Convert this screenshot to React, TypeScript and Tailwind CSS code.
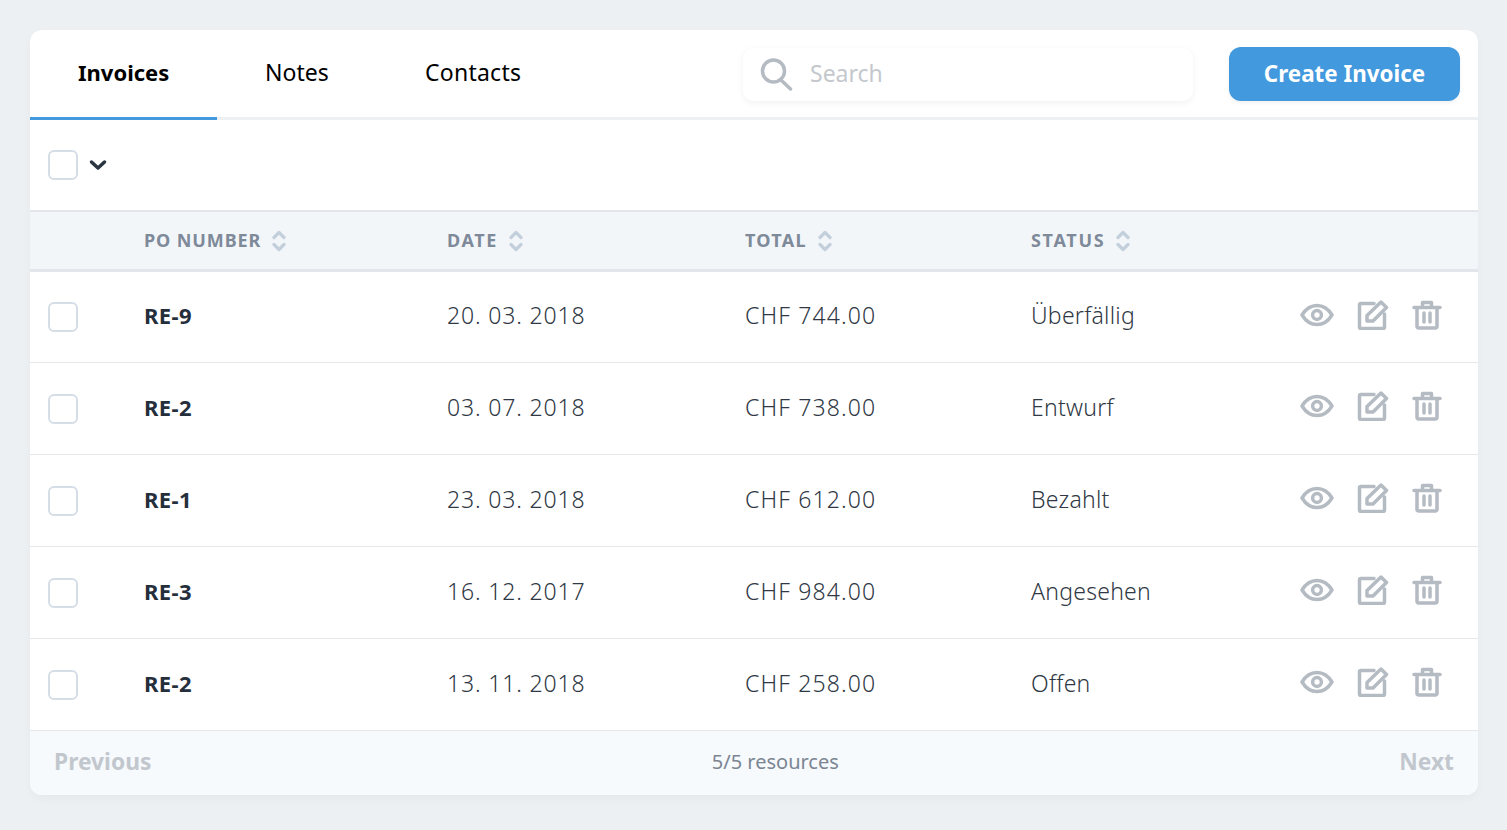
const rows = [
  { po: 'RE-9', date: '20. 03. 2018', total: 'CHF 744.00', status: 'Überfällig' },
  { po: 'RE-2', date: '03. 07. 2018', total: 'CHF 738.00', status: 'Entwurf' },
  { po: 'RE-1', date: '23. 03. 2018', total: 'CHF 612.00', status: 'Bezahlt' },
  { po: 'RE-3', date: '16. 12. 2017', total: 'CHF 984.00', status: 'Angesehen' },
  { po: 'RE-2', date: '13. 11. 2018', total: 'CHF 258.00', status: 'Offen' },
]

function Checkbox() {
  return <div className="w-[30px] h-[30px] rounded-[6px] border-2 border-[#d5dde6] bg-white" />
}

function SortIcon() {
  return (
    <svg width="14" height="24" viewBox="0 0 14 24" fill="none" stroke="#c3d0dc" strokeWidth="3.2" strokeLinecap="round" strokeLinejoin="round">
      <path d="M2 8.500 7 3.500 12 8.500" />
      <path d="M2 15.500 7 20.500 12 15.500" />
    </svg>
  )
}

function HeaderCell({ label, className }: { label: string; className: string }) {
  return (
    <div className="flex items-center gap-[11px]">
      <span className={`text-[18px] font-bold text-[#7e8a99] ${className}`}>{label}</span>
      <SortIcon />
    </div>
  )
}

function EyeIcon() {
  return (
    <svg width="34" height="26" viewBox="0 0 34 26" fill="none" stroke="#b5bbc2" strokeWidth="3.500" strokeLinejoin="round">
      <path d="M2 13C6 6.500 11 3.500 17 3.500S28 6.500 32 13C28 19.500 23 22.500 17 22.500S6 19.500 2 13Z" />
      <circle cx="17" cy="13" r="4.400" />
    </svg>
  )
}

function EditIcon() {
  return (
    <svg width="32" height="30" viewBox="0 0 32 30" fill="none" stroke="#b5bbc2" strokeWidth="3.500" strokeLinecap="round" strokeLinejoin="round">
      <path d="M17 3.500H4a1.500 1.500 0 0 0-1.500 1.500v22A1.500 1.500 0 0 0 4 28.500h22a1.500 1.500 0 0 0 1.500-1.500V14" />
      <path d="M10 21v-5.500L24 2l5.500 5.500L16 21Z" />
    </svg>
  )
}

function TrashIcon() {
  return (
    <svg width="30" height="30" viewBox="0 0 30 30" fill="none" stroke="#b5bbc2" strokeWidth="3.500" strokeLinecap="round" strokeLinejoin="round">
      <path d="M2 7.500h26" />
      <path d="M10.500 7V2.500h9V7" />
      <path d="M5 8v18.500A1.500 1.500 0 0 0 6.500 28h17a1.500 1.500 0 0 0 1.500-1.500V8" />
      <path d="M12 13v9" />
      <path d="M18 13v9" />
    </svg>
  )
}

export default function App() {
  return (
    <div className="h-[830px] bg-[#edf0f3] px-[30px] pt-[30px] font-['Noto_Sans','Liberation_Sans',sans-serif]">
      <div className="w-[1448px] h-[765px] bg-white rounded-[12px] shadow-[0_4px_8px_rgba(0,0,0,0.03)] overflow-hidden flex flex-col">
        {/* tabs */}
        <div className="h-[90px] flex border-b-[3px] border-[#edf0f3]">
          <div className="w-[187px] h-[90px] border-b-[3px] border-[#4299dd] pl-[48px] pt-[24px] text-[22px] leading-[36px] font-bold text-black shrink-0">Invoices</div>
          <div className="w-[160px] pl-[48px] pt-[24px] text-[23px] leading-[36px] text-black shrink-0">Notes</div>
          <div className="w-[366px] pl-[48px] pt-[24px] text-[23px] tracking-[0.25px] leading-[36px] text-black shrink-0">Contacts</div>
          <div className="mt-[18px] w-[450px] h-[53px] rounded-[10px] bg-white shadow-[0_2px_6px_rgba(0,0,0,0.06)] flex items-center pl-[16px] gap-[17px] shrink-0">
            <svg width="34" height="34" viewBox="0 0 34 34" fill="none" stroke="#b5bbc2" strokeWidth="3.500" strokeLinecap="round" className="-mt-[2px]">
              <circle cx="14.500" cy="14" r="11" />
              <path d="M22 23 31.500 32" />
            </svg>
            <span className="text-[23px] text-[#c4c8cd] -mt-[2px]">Search</span>
          </div>
          <div className="ml-[36px] mt-[17px] w-[231px] h-[54px] rounded-[12px] bg-[#4299dd] flex items-center justify-center text-[22.400px] font-bold text-white shadow-[0_2px_4px_rgba(0,0,0,0.06)] shrink-0">Create Invoice</div>
        </div>

        {/* select all */}
        <div className="h-[90px] flex items-center pl-[18px] gap-[11px]">
          <Checkbox />
          <svg width="18" height="12" viewBox="0 0 18 12" fill="none" stroke="#2b3541" strokeWidth="3.500" strokeLinecap="round" strokeLinejoin="round">
            <path d="M2.500 3 9 9 15.500 3" />
          </svg>
        </div>

        {/* table head */}
        <div className="h-[62px] shrink-0 bg-[#f3f6f9] border-t-[2px] border-b-[3px] border-[#e2e6ea] grid grid-cols-[114px_303px_298px_286px_1fr] items-center">
          <div />
          <HeaderCell label="PO NUMBER" className="tracking-[0.9px]" />
          <HeaderCell label="DATE" className="tracking-[1.6px]" />
          <HeaderCell label="TOTAL" className="tracking-[1.3px]" />
          <HeaderCell label="STATUS" className="tracking-[1.7px]" />
        </div>

        {/* rows */}
        {rows.map((row, i) => (
          <div key={i} className={`${i === 0 ? 'h-[91px]' : 'h-[92px]'} shrink-0 border-b border-[#e5e8eb] grid grid-cols-[114px_303px_298px_286px_1fr] items-center`}>
            <div className="pl-[18px]">
              <Checkbox />
            </div>
            <div className="text-[22px] tracking-[0.4px] font-bold text-[#252f3c] pb-[3px]">{row.po}</div>
            <div className="text-[23px] font-light tracking-[0.85px] text-[#2f3844] pb-[3px]">{row.date}</div>
            <div className="text-[23px] font-light tracking-[1.15px] text-[#2f3844] pb-[3px]">{row.total}</div>
            <div className="flex items-center justify-between pr-[36px]">
              <span className="text-[23px] font-light tracking-[0.25px] text-[#2f3844] pb-[3px]">{row.status}</span>
              <div className="flex items-center gap-[23px] -mt-[5px]">
                <EyeIcon />
                <EditIcon />
                <TrashIcon />
              </div>
            </div>
          </div>
        ))}

        {/* footer */}
        <div className="flex-1 bg-[#f6fafd] flex items-center justify-between px-[24px] pb-[2px]">
          <span className="text-[22.800px] font-bold text-[#c2c7ce]">Previous</span>
          <span className="text-[20px] text-[#7c8592]">5/5 resources</span>
          <span className="text-[22.800px] font-bold text-[#c2c7ce]">Next</span>
        </div>
      </div>
    </div>
  )
}
